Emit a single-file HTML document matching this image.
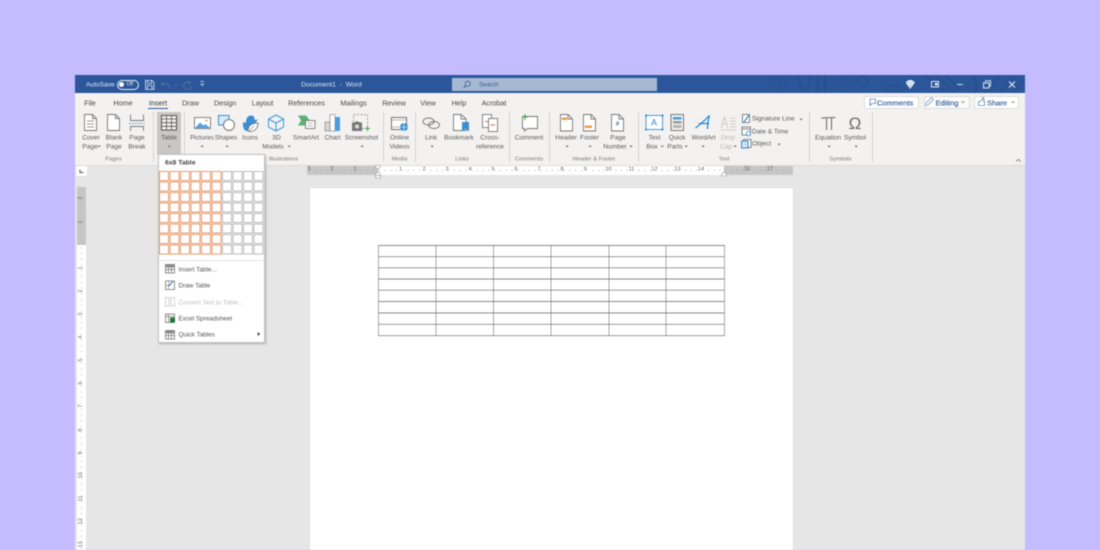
<!DOCTYPE html>
<html><head><meta charset="utf-8"><style>
html,body{margin:0;padding:0;width:1100px;height:550px;overflow:hidden;background:#c5bbff;font-family:"Liberation Sans",sans-serif}
#w{position:absolute;left:0;top:0;width:1100px;height:550px;filter:blur(.42px);overflow:hidden}
.a{position:absolute}
.t{position:absolute;white-space:nowrap;transform:translate(-50%,-50%);font-size:6.6px;color:#5a5a5a;line-height:9px;margin-top:.5px}
.l{position:absolute;white-space:nowrap;transform:translateY(-50%);font-size:6.6px;color:#5a5a5a;line-height:9px;margin-top:.5px}
.tab{font-size:7.2px;color:#484848}
.g{font-size:5.8px;color:#7a7a7a}
.r{font-size:5.6px;color:#666;margin-top:0}
.m{font-size:6.4px;color:#555}
.v{position:absolute;width:5px;height:8px;transform:translate(-50%,-50%) rotate(-90deg);font-size:5.6px;line-height:8px;text-align:center;color:#666}
.s{position:absolute;width:1px;top:112px;height:50px;background:#d4d3d2}
.c{position:absolute;width:1.3px;height:1.3px;border-right:.6px solid #777;border-bottom:.6px solid #777;transform:rotate(45deg)}
.b{position:absolute;top:96px;height:11px;background:#fff;border:1px solid #dcdcdc;border-radius:2px;box-sizing:content-box}
</style></head><body><div id="w">

<!-- window -->
<div class="a" style="left:75px;top:75px;width:950px;height:475px;background:#e6e6e6"></div>
<div class="a" style="left:75px;top:75px;width:950px;height:18px;background:#2b579a"></div>
<div class="a" style="left:75px;top:93px;width:950px;height:72px;background:#f3f2f1;border-bottom:1px solid #dcdbda"></div>

<!-- title bar decoration -->
<svg class="a" style="left:75px;top:75px" width="950" height="18" viewBox="75 75 950 18">
<g stroke="#28518f" fill="none">
<path d="M771 75V93M775 75V93M779 75V93M782 75V93M785 75V93" stroke-width="1"/>
<path d="M797 75L803 93M810 75L808 93" stroke-width="2"/>
<path d="M818 75V93M825 75V93" stroke-width="3.5"/>
<path d="M832 75V90M835 75V90M838 75V90M841 75V90M844 75V90M847 75V85M850 75V85" stroke-width="1"/>
<circle cx="863" cy="81" r="5" stroke-width="2"/>
<circle cx="894" cy="94" r="9" stroke-width="2"/><circle cx="894" cy="94" r="4" stroke-width="1.5"/>
<path d="M925 75L945 93M935 75L955 93M945 75L960 90" stroke-width="2"/>
<path d="M972 75Q980 84 974 93" stroke-width="3"/>
<path d="M1000 75L985 93M1015 75L1000 93M1024 80L1014 93" stroke-width="1.5"/>
</g></svg>

<!-- title bar -->
<div class="l" style="left:86px;top:84px;font-size:6.6px;color:#dfe6f2">AutoSave</div>
<div class="a" style="left:117px;top:79.5px;width:20px;height:8px;border:.8px solid #e8edf5;border-radius:5px"></div>
<div class="a" style="left:119px;top:81.5px;width:5px;height:5px;background:#fff;border-radius:50%"></div>
<div class="l" style="left:126.5px;top:84px;font-size:5px;color:#dfe6f2">Off</div>
<svg class="a" style="left:75px;top:75px" width="950" height="18" viewBox="75 75 950 18" fill="none">
<path d="M145.5 80.5H152L154 82.5V89.5H145.5ZM147.5 80.5V83.5H151.5V80.5M147.5 89.5V85.5H152V89.5" stroke="#dfe6f2" stroke-width=".8"/>
<path d="M163 82L161.5 84.5 164 85.5M162 84.5C166 82 170 84 169.5 89" stroke="#54739f" stroke-width=".9"/>
<path d="M174.5 84L176 85.5 177.5 84" stroke="#54739f" stroke-width=".7"/>
<path d="M188 81.5L190.5 82.5 189 84.5M190 82.5C185 81 182 85 184 88C186 90.5 191 90 192 86" stroke="#54739f" stroke-width=".9"/>
<path d="M200.5 81.5H204M200.8 83.5L202.3 85.5 203.8 83.5" stroke="#dfe6f2" stroke-width=".8"/>
<path d="M906 82.5L908.5 80.5H912L914.5 82.5 910.2 88.5Z" stroke="#f1f4f9" fill="#f1f4f9" stroke-width=".7"/>
<path d="M906 82.5H914.5M908.5 82.5L910.2 88.5 912 82.5" stroke="#8fa8cc" stroke-width=".5"/>
<rect x="931.5" y="81.5" width="7" height="5.5" stroke="#eef2f8" stroke-width=".9"/><rect x="935" y="83" width="2.5" height="2.5" fill="#eef2f8"/>
<path d="M957 84.5H963" stroke="#cdd8e8" stroke-width="1"/>
<path d="M983.5 83H989V88H983.5ZM985.5 82V80.8H990.5V86H989.5" stroke="#e8edf5" stroke-width=".9"/>
<path d="M1009 81.5L1015 87.5M1015 81.5L1009 87.5" stroke="#f1f4f9" stroke-width=".9"/>
</svg>
<div class="t" style="left:331.5px;top:84.5px;font-size:6.8px;color:#dfe6f2">Document1&nbsp; - &nbsp;Word</div>
<div class="a" style="left:452px;top:78px;width:205px;height:13px;background:#a6b9d3"></div>
<svg class="a" style="left:462px;top:80px" width="10" height="10" fill="none"><circle cx="5.7" cy="3.8" r="2.6" stroke="#3f5f92" stroke-width=".8"/><path d="M3.8 5.7L1.5 8" stroke="#3f5f92" stroke-width=".9"/></svg>
<div class="l" style="left:479px;top:84px;font-size:6.2px;color:#3f5f92">Search</div>

<!-- tabs -->
<div class="t tab" style="left:90px;top:102.5px">File</div>
<div class="t tab" style="left:123px;top:102.5px">Home</div>
<div class="t tab" style="left:158px;top:102.5px;color:#333">Insert</div>
<div class="a" style="left:148px;top:108px;width:20px;height:1.2px;background:#2b579a"></div>
<div class="t tab" style="left:190.5px;top:102.5px">Draw</div>
<div class="t tab" style="left:225px;top:102.5px">Design</div>
<div class="t tab" style="left:262.5px;top:102.5px">Layout</div>
<div class="t tab" style="left:306.5px;top:102.5px">References</div>
<div class="t tab" style="left:353.5px;top:102.5px">Mailings</div>
<div class="t tab" style="left:394px;top:102.5px">Review</div>
<div class="t tab" style="left:428px;top:102.5px">View</div>
<div class="t tab" style="left:459px;top:102.5px">Help</div>
<div class="t tab" style="left:494px;top:102.5px">Acrobat</div>

<!-- top right buttons -->
<div class="b" style="left:864px;width:53px"></div>
<div class="b" style="left:924px;width:44px;background:#fbfbfb"></div>
<div class="b" style="left:974px;width:43px"></div>
<div class="l" style="left:877px;top:102px;font-size:7.5px;color:#2b579a;-webkit-text-stroke:.12px #2b579a">Comments</div>
<div class="l" style="left:935.5px;top:102px;font-size:7.5px;color:#2b579a;-webkit-text-stroke:.12px #2b579a">Editing</div>
<div class="l" style="left:987px;top:102px;font-size:7.5px;color:#2b579a;-webkit-text-stroke:.12px #2b579a">Share</div>
<svg class="a" style="left:860px;top:95px" width="165" height="14" fill="none" stroke="#2b579a" stroke-width=".6">
<path d="M10 4H15.5V8.5H12L10 10.5Z"/>
<path d="M65.5 10.5L66 8 71.5 2.5 73.5 4.5 68 10Z" stroke="#5a7fb5"/>
<path d="M118.5 10.5V6.5H120.5L122 4.5 123 2.5 124 3.5 123.5 6H124.5V10.5Z"/>
<path d="M101.5 6.500L103 7.700 104.500 6.500" stroke="#555"/>
<path d="M151.500 6.500L153 7.700 154.500 6.500" stroke="#555"/>
</svg>

<!-- Ribbon separators -->
<div class="s" style="left:153px"></div><div class="s" style="left:184px"></div><div class="s" style="left:383px"></div><div class="s" style="left:415px"></div><div class="s" style="left:509px"></div><div class="s" style="left:549px"></div><div class="s" style="left:638px"></div><div class="s" style="left:809px"></div><div class="s" style="left:872px"></div>

<!-- Table button highlight -->
<div class="a" style="left:157px;top:112px;width:24px;height:43px;background:#c8c7c6"></div>

<!-- Ribbon icons -->
<svg class="a" style="left:0;top:0" width="1100" height="170" fill="none" stroke-width=".9">
<!-- Cover page -->
<path d="M84.5 114.500H92.5L96.5 118.500V130.500H84.5Z" fill="#fff" stroke="#777"/><path d="M92.5 114.500V118.500H96.5" stroke="#777"/><path d="M87 121H94M87 124H94M87 127H94" stroke="#999"/>
<!-- Blank -->
<path d="M107.500 114.500H115.500L119.500 118.500V130.500H107.500Z" fill="#fff" stroke="#777"/><path d="M115.500 114.500V118.500H119.500" stroke="#777"/>
<!-- Page break -->
<path d="M130.500 114.500V120.500H143.500V114.500M130.500 131V126.500H143.500V131" stroke="#777"/><path d="M129 123.500H145" stroke="#5aa2dc" stroke-dasharray="2 1"/>
<!-- Table -->
<rect x="161.500" y="115.500" width="15" height="14.500" fill="#f3f2f1" stroke="#555" stroke-width="1"/><path d="M161.500 119H176.500M161.500 122.700H176.500M161.500 126.300H176.500M166.500 115.500V130M171.500 115.500V130" stroke="#555" stroke-width=".8"/>
<!-- Pictures -->
<rect x="194.500" y="117.500" width="16" height="11" fill="#fff" stroke="#777"/><path d="M195 128L200 122.500 203.500 125.500 205.500 124 210 128Z" fill="#5aa2dc"/><circle cx="206.500" cy="120.500" r="1" fill="#ed8b3a"/>
<!-- Shapes -->
<rect x="218.500" y="115.500" width="10.500" height="9.500" fill="#d8e9f7" stroke="#3a8fd4" stroke-width="1"/><circle cx="229" cy="125" r="5.500" fill="#fff" stroke="#777" stroke-width="1"/>
<!-- Icons -->
<path d="M243 122.500H246C246 118 248 115.500 251 115.500 254 115.500 255 118 254.500 120L258 119.500 255.500 122.500C256 128 252 131 247 131 244 131 242.500 127 243 122.500Z" fill="#3a8fd4"/>
<path d="M248 131C248 126 251 123 258 123 258 128 255 131.500 250 131.500Z" fill="#fff" stroke="#777"/><path d="M248 131.500L254 126" stroke="#777" stroke-width=".6"/>
<!-- 3D -->
<path d="M276 115L283.500 119V127L276 131 268.500 127V119ZM268.500 119L276 123 283.500 119M276 123V131" stroke="#3a9ad9" stroke-width="1"/>
<!-- SmartArt -->
<path d="M298 115.500H306L310 120.500 306 125.500H298L301 120.500Z" fill="#5cb176"/><rect x="305.500" y="120.500" width="9.500" height="8" fill="#fff" stroke="#777"/><path d="M307.500 123.200H313M307.500 125.800H313" stroke="#888" stroke-width=".7"/>
<!-- Chart -->
<rect x="325" y="122" width="5" height="9" fill="#d5d5d5" stroke="#888" stroke-width=".7"/><rect x="330" y="114.500" width="5" height="16.500" fill="#fff" stroke="#888" stroke-width=".7"/><rect x="335" y="117" width="5" height="14" fill="#4a9ede"/>
<!-- Screenshot -->
<rect x="353.500" y="114.500" width="14" height="14" stroke="#999" stroke-dasharray="2 1.500"/><path d="M352 122.500H354.500L355.500 121.500H358.500L359.500 122.500H362V131H352Z" fill="#777"/><circle cx="357" cy="126.500" r="2" fill="#ddd"/><path d="M367.500 126V131M365 128.500H370" stroke="#3fa14f" stroke-width="1"/>
<!-- Online Videos -->
<rect x="391.500" y="117.500" width="15" height="12" fill="#fff" stroke="#666"/><path d="M391.500 120H406.500M391.500 127H406.500" stroke="#666" stroke-dasharray="1 1"/><circle cx="404" cy="127" r="4" fill="#3a8fd4"/><path d="M400 127H408M404 123V131" stroke="#fff" stroke-width=".6"/>
<!-- Link -->
<ellipse cx="428.500" cy="121.500" rx="5.500" ry="3.500" stroke="#777"/><ellipse cx="434" cy="125" rx="5.500" ry="3.500" stroke="#777"/>
<!-- Bookmark -->
<path d="M453.500 114.500H461L466 119V130.500H453.500Z" fill="#fff" stroke="#777"/><path d="M461 114.500V119H466" stroke="#777"/><path d="M462 122H469V131.500L465.500 129 462 131.500Z" fill="#3a8fd4"/>
<!-- Cross-ref -->
<rect x="482.500" y="114.500" width="9" height="13" fill="#fff" stroke="#777"/><rect x="488.500" y="118.500" width="9" height="13" fill="#fff" stroke="#777"/><path d="M490.500 125H495" stroke="#d9534f"/><path d="M485 121.500H488" stroke="#d9534f"/>
<!-- Comment -->
<path d="M522.500 116.500H537.500V128.500H527.500L524.500 131V128.500H522.500Z" fill="#fff" stroke="#777"/><path d="M525 114V120M522 117H528" stroke="#3fa14f" stroke-width="1"/>
<!-- Header -->
<path d="M560.500 114.500H568L572.500 119V131H560.500Z" fill="#fff" stroke="#777"/><path d="M568 114.500V119H572.500" stroke="#777"/><rect x="562" y="117.500" width="5" height="2.500" fill="#ed9b40"/>
<!-- Footer -->
<path d="M583.500 114.500H591L595.500 119V131H583.500Z" fill="#fff" stroke="#777"/><path d="M591 114.500V119H595.500" stroke="#777"/><rect x="585" y="125.500" width="7" height="2.500" fill="#ed9b40"/>
<!-- Page number -->
<path d="M611.500 114.500H619L623.500 119V131H611.500Z" fill="#fff" stroke="#777"/><path d="M619 114.500V119H623.500" stroke="#777"/>
<!-- Text box -->
<rect x="646" y="115.500" width="16.500" height="14" fill="#fff" stroke="#3a8fd4"/><rect x="645" y="114.500" width="2" height="2" fill="#3a8fd4"/><rect x="661.500" y="114.500" width="2" height="2" fill="#3a8fd4"/><rect x="645" y="128.500" width="2" height="2" fill="#3a8fd4"/><rect x="661.500" y="128.500" width="2" height="2" fill="#3a8fd4"/>
<!-- Quick parts -->
<rect x="671" y="114.500" width="12.500" height="16" fill="#f3f2f1" stroke="#777" stroke-width="1"/><rect x="673" y="117" width="8.500" height="2.500" fill="#4a9ede"/><rect x="673" y="121" width="8.500" height="2.500" fill="#999"/><rect x="673" y="125" width="8.500" height="3" fill="#b5b5b5"/>
<!-- WordArt -->
<path d="M695.500 128C701 124 706 119 709.500 115.500 708 120 707.500 124 707.500 129M699 123.500H709" stroke="#1d84d8" stroke-width="1.200"/>
<!-- Drop cap -->
<path d="M721 128L724.500 117 728 128M722.300 124H726.700M720.500 130H736M730 118H736M730 121H736M730 124H736M730 127H736" stroke="#c3c3c3" stroke-width=".8"/>
<!-- Sig line -->
<rect x="742.500" y="114.500" width="7" height="8" fill="#fff" stroke="#777"/><path d="M744 122L749.500 114.500" stroke="#3a8fd4" stroke-width="1.300"/>
<!-- Date -->
<rect x="742" y="127" width="8.500" height="8" fill="#fff" stroke="#777"/><path d="M742 129H750.500" stroke="#777"/><circle cx="748.500" cy="133.500" r="2.200" fill="#fff" stroke="#3a8fd4"/>
<!-- Object -->
<rect x="743.500" y="139.500" width="7.500" height="8" fill="#fff" stroke="#777"/><rect x="741.500" y="141" width="6.500" height="7" fill="#cfe3f5" stroke="#2f7fc4"/>
<!-- Pi -->
<path d="M821.500 118.200C825 117.500 831 117.800 835.500 117.500M826.500 118V130M831.500 118V130" stroke="#666" stroke-width="1"/>
<!-- collapse -->
<path d="M1016 161.500L1018.500 159.500 1021 161.500" stroke="#666" stroke-width=".8"/>
</svg>
<div class="t" style="left:654px;top:122.500px;font-size:9px;color:#2e86d0">A</div>
<div class="t" style="left:617.500px;top:124.500px;font-size:6px;color:#2b6cb0;font-weight:bold">#</div>
<div class="t" style="left:855px;top:123px;font-size:17px;color:#6a6a6a;line-height:18px">Ω</div>

<!-- Ribbon labels -->
<div class="t" style="left:91px;top:137px">Cover</div><div class="t" style="left:90px;top:146px">Page</div>
<div class="t" style="left:114px;top:137px">Blank</div><div class="t" style="left:114px;top:146px">Page</div>
<div class="t" style="left:137px;top:137px">Page</div><div class="t" style="left:137px;top:146px">Break</div>
<div class="t" style="left:169px;top:137px">Table</div>
<div class="t" style="left:202px;top:137px">Pictures</div>
<div class="t" style="left:226px;top:137px">Shapes</div>
<div class="t" style="left:250px;top:137px">Icons</div>
<div class="t" style="left:276.500px;top:137px">3D</div><div class="t" style="left:273px;top:146px">Models</div>
<div class="t" style="left:306px;top:137px">SmartArt</div>
<div class="t" style="left:332.500px;top:137px">Chart</div>
<div class="t" style="left:361.500px;top:137px">Screenshot</div>
<div class="t" style="left:399.500px;top:137px">Online</div><div class="t" style="left:399.500px;top:146px">Videos</div>
<div class="t" style="left:431px;top:137px">Link</div>
<div class="t" style="left:459px;top:137px">Bookmark</div>
<div class="t" style="left:490px;top:137px">Cross-</div><div class="t" style="left:490px;top:146px">reference</div>
<div class="t" style="left:529px;top:137px">Comment</div>
<div class="t" style="left:566px;top:137px">Header</div>
<div class="t" style="left:589.500px;top:137px">Footer</div>
<div class="t" style="left:618px;top:137px">Page</div><div class="t" style="left:615px;top:146px">Number</div>
<div class="t" style="left:654.500px;top:137px">Text</div><div class="t" style="left:652px;top:146px">Box</div>
<div class="t" style="left:677px;top:137px">Quick</div><div class="t" style="left:675px;top:146px">Parts</div>
<div class="t" style="left:703.500px;top:137px">WordArt</div>
<div class="t" style="left:728px;top:137px;color:#b5b5b5">Drop</div><div class="t" style="left:726px;top:146px;color:#b5b5b5">Cap</div>
<div class="l" style="left:752px;top:118.500px">Signature Line</div>
<div class="l" style="left:752px;top:131px">Date &amp; Time</div>
<div class="l" style="left:752px;top:143.500px">Object</div>
<div class="t" style="left:828px;top:137px">Equation</div>
<div class="t" style="left:855px;top:137px">Symbol</div>

<!-- chevrons -->
<div class="c" style="left:98px;top:145px"></div><div class="c" style="left:168px;top:145px"></div><div class="c" style="left:201px;top:145px"></div><div class="c" style="left:225.500px;top:145px"></div><div class="c" style="left:287.500px;top:145px"></div><div class="c" style="left:360.500px;top:145px"></div><div class="c" style="left:430.500px;top:145px"></div><div class="c" style="left:565.500px;top:145px"></div><div class="c" style="left:588.500px;top:145px"></div><div class="c" style="left:629.500px;top:145px"></div><div class="c" style="left:660.500px;top:145px"></div><div class="c" style="left:684.500px;top:145px"></div><div class="c" style="left:701.500px;top:145px"></div><div class="c" style="left:733.500px;top:145px"></div><div class="c" style="left:799.500px;top:117.500px"></div><div class="c" style="left:777.500px;top:142.500px"></div><div class="c" style="left:827.500px;top:145px"></div><div class="c" style="left:854.500px;top:145px"></div>

<!-- group labels -->
<div class="t g" style="left:113.500px;top:159.500px">Pages</div>
<div class="t g" style="left:283.500px;top:159.500px">Illustrations</div>
<div class="t g" style="left:399.500px;top:159.500px">Media</div>
<div class="t g" style="left:462px;top:159.500px">Links</div>
<div class="t g" style="left:529px;top:159.500px">Comments</div>
<div class="t g" style="left:594px;top:159.500px">Header &amp; Footer</div>
<div class="t g" style="left:724px;top:159.500px">Text</div>
<div class="t g" style="left:840.500px;top:159.500px">Symbols</div>

<!-- Horizontal ruler -->
<div class="a" style="left:307px;top:166px;width:486px;height:8.500px;background:#c6c6c6"></div>
<div class="a" style="left:378px;top:166px;width:346px;height:8.500px;background:#fff"></div>
<svg class="a" style="left:307px;top:166px" width="486" height="9">
<defs><pattern id="rt" x="0" y="0" width="5.775" height="9" patternUnits="userSpaceOnUse"><rect x="2.500" y="3.800" width=".7" height="1.200" fill="#999"/></pattern></defs>
<rect width="486" height="9" fill="url(#rt)"/>
</svg>
<div class="t r" style="left:309px;top:170px;background:#c6c6c6">3</div><div class="t r" style="left:332px;top:170px;background:#c6c6c6">2</div><div class="t r" style="left:355px;top:170px;background:#c6c6c6">1</div>
<div class="t r" style="left:400.500px;top:170px;background:#fff">1</div><div class="t r" style="left:424px;top:170px;background:#fff">2</div><div class="t r" style="left:447px;top:170px;background:#fff">3</div><div class="t r" style="left:470px;top:170px;background:#fff">4</div><div class="t r" style="left:493px;top:170px;background:#fff">5</div><div class="t r" style="left:516px;top:170px;background:#fff">6</div><div class="t r" style="left:539px;top:170px;background:#fff">7</div><div class="t r" style="left:562px;top:170px;background:#fff">8</div><div class="t r" style="left:585px;top:170px;background:#fff">9</div><div class="t r" style="left:608.500px;top:170px;background:#fff">10</div><div class="t r" style="left:631.500px;top:170px;background:#fff">11</div><div class="t r" style="left:654.500px;top:170px;background:#fff">12</div><div class="t r" style="left:677.500px;top:170px;background:#fff">13</div><div class="t r" style="left:701px;top:170px;background:#fff">14</div>
<div class="t r" style="left:747px;top:170px;background:#c6c6c6">16</div><div class="t r" style="left:770px;top:170px;background:#c6c6c6">17</div>
<svg class="a" style="left:374px;top:163px" width="356" height="16" fill="#fff" stroke="#999" stroke-width=".6">
<path d="M1.500 2.500H6.500V4L4 6.500 1.500 4Z"/><path d="M1.500 11L4 8.800 6.500 11V12.500H1.500Z"/><rect x="1.500" y="12.500" width="5" height="2.500"/><path d="M347.500 11.500L350 8.800 352.500 11.500V13H347.500Z"/>
</svg>

<!-- corner box + Vertical ruler -->
<div class="a" style="left:76px;top:166px;width:11px;height:10px;background:#fff;border-radius:1px"></div>
<svg class="a" style="left:76px;top:166px" width="11" height="10"><path d="M4 3.500V6.500H7.500" fill="none" stroke="#555" stroke-width="1"/></svg>
<div class="a" style="left:77px;top:187px;width:8.500px;height:58px;background:#c6c6c6"></div>
<div class="a" style="left:77px;top:245px;width:8.500px;height:305px;background:#fff"></div>
<svg class="a" style="left:77px;top:187px" width="9" height="363">
<defs><pattern id="vt" x="0" y="0" width="9" height="5.775" patternUnits="userSpaceOnUse"><rect x="3.800" y="2.500" width="1.200" height=".7" fill="#aaa"/></pattern></defs>
<rect width="9" height="363" fill="url(#vt)"/>
</svg>
<div class="v" style="left:81px;top:198px;background:#c6c6c6">2</div><div class="v" style="left:81px;top:222px;background:#c6c6c6">1</div>
<div class="v" style="left:81px;top:268px;background:#fff">1</div><div class="v" style="left:81px;top:291px;background:#fff">2</div><div class="v" style="left:81px;top:314px;background:#fff">3</div><div class="v" style="left:81px;top:337px;background:#fff">4</div><div class="v" style="left:81px;top:360px;background:#fff">5</div><div class="v" style="left:81px;top:383px;background:#fff">6</div><div class="v" style="left:81px;top:406px;background:#fff">7</div><div class="v" style="left:81px;top:430px;background:#fff">8</div><div class="v" style="left:81px;top:453px;background:#fff">9</div><div class="v" style="left:81px;top:475.500px;background:#fff">10</div><div class="v" style="left:81px;top:498.500px;background:#fff">11</div><div class="v" style="left:81px;top:522px;background:#fff">12</div><div class="v" style="left:81px;top:545px;background:#fff">13</div>

<!-- Page -->
<div class="a" style="left:310px;top:188px;width:483px;height:362px;background:#fff;box-shadow:0 0 1px #d0d0d0"></div>
<svg class="a" style="left:370px;top:240px" width="365" height="100" fill="none" stroke="#666" stroke-width=".65">
<path d="M8.500 5V96M66 5V96M123.500 5V96M181 5V96M239 5V96M296 5V96M354.500 5V96" opacity=".85"/>
<path d="M8.500 5.500H354.500M8.500 16.700H354.500M8.500 27.800H354.500M8.500 39H354.500M8.500 50.200H354.500M8.500 61.500H354.500M8.500 73H354.500M8.500 84.300H354.500M8.500 95.700H354.500"/>
</svg>

<!-- Table dropdown -->
<div class="a" style="left:158px;top:154px;width:107px;height:189px;background:#fff;border:1px solid #c4c4c4;box-sizing:border-box;box-shadow:1px 1px 2px rgba(0,0,0,.25)"></div>
<div class="l" style="left:165px;top:162px;font-size:6.8px;font-weight:bold;color:#444">6x8 Table</div>
<svg class="a" style="left:159px;top:171px" width="106" height="85">
<defs>
<pattern id="gc" x="0" y="0" width="21" height="21" patternUnits="userSpaceOnUse"><g fill="#fff" stroke="#ababab" stroke-width=".8"><rect x=".5" y=".5" width="9" height="9"/><rect x="11" y=".5" width="9" height="9"/><rect x=".5" y="11" width="9" height="9"/><rect x="11" y="11" width="9" height="9"/></g></pattern>
<pattern id="oc" x="0" y="0" width="21" height="21" patternUnits="userSpaceOnUse"><g fill="#fff" stroke="#ea9360" stroke-width=".9"><rect x=".5" y=".5" width="9" height="9"/><rect x="11" y=".5" width="9" height="9"/><rect x=".5" y="11" width="9" height="9"/><rect x="11" y="11" width="9" height="9"/></g></pattern>
</defs>
<rect x="0" y="0" width="105" height="84" fill="url(#gc)"/>
<rect x="0" y="0" width="63" height="84" fill="url(#oc)"/>
</svg>
<div class="a" style="left:159px;top:260px;width:105px;height:1px;background:#e3e3e3"></div>
<svg class="a" style="left:163px;top:262px" width="14" height="80" fill="none" stroke="#777" stroke-width=".8">
<g><rect x="2.500" y="2.500" width="9" height="8.500" fill="#fff"/><path d="M2.500 5H11.500M2.500 7.500H11.500M5.500 2.500V11M8.500 2.500V11" stroke-width=".7"/><rect x="2.500" y="2.500" width="9" height="2" fill="#888" stroke="none"/></g>
<g transform="translate(0,16.500)"><rect x="2.500" y="2.500" width="9" height="8.500" fill="#fff"/><path d="M5 8L10 3" stroke="#3a8fd4" stroke-width="1.200"/><path d="M2.500 7H8M5.500 2.500V11" stroke-width=".5"/></g>
<g transform="translate(0,33)" stroke="#c8c8c8"><rect x="2.500" y="2.500" width="3.500" height="8.500"/><rect x="8" y="2.500" width="3.500" height="8.500"/></g>
<g transform="translate(0,49.500)"><rect x="2.500" y="2.500" width="9" height="8.500" fill="#fff"/><path d="M2.500 5H11.500M5.500 2.500V11" stroke-width=".7"/><rect x="7" y="6" width="5" height="5" fill="#217346" stroke="none"/></g>
<g transform="translate(0,66)"><rect x="2.500" y="2.500" width="9" height="8.500" fill="#fff"/><path d="M2.500 5H11.500M2.500 7.500H11.500M5.500 2.500V11M8.500 2.500V11" stroke-width=".7"/><rect x="2.500" y="2.500" width="9" height="2" fill="#888" stroke="none"/></g>
</svg>
<div class="l m" style="left:178.500px;top:269px">Insert Table...</div>
<div class="l m" style="left:178.500px;top:285.500px">Draw Table</div>
<div class="l m" style="left:178.500px;top:302px;color:#c0c0c0">Convert Text to Table...</div>
<div class="l m" style="left:178.500px;top:318px">Excel Spreadsheet</div>
<div class="l m" style="left:178.500px;top:334.500px">Quick Tables</div>
<svg class="a" style="left:256px;top:331px" width="6" height="6"><path d="M1.500 1L4.500 3 1.500 5Z" fill="#555"/></svg>

</div></body></html>
